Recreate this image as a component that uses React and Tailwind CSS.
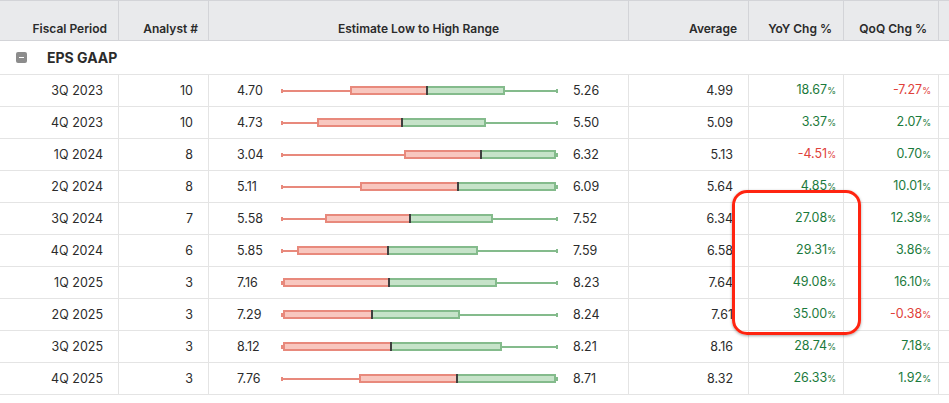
import React from 'react';

const rows = [
  { p: '3Q 2023', n: 10, lo: '4.70', hi: '5.26', b: [350, 427, 505], avg: '4.99', yoy: '18.67', qoq: '-7.27' },
  { p: '4Q 2023', n: 10, lo: '4.73', hi: '5.50', b: [317, 402, 486], avg: '5.09', yoy: '3.37', qoq: '2.07' },
  { p: '1Q 2024', n: 8, lo: '3.04', hi: '6.32', b: [404, 481, 556], avg: '5.13', yoy: '-4.51', qoq: '0.70' },
  { p: '2Q 2024', n: 8, lo: '5.11', hi: '6.09', b: [360, 458, 556], avg: '5.64', yoy: '4.85', qoq: '10.01' },
  { p: '3Q 2024', n: 7, lo: '5.58', hi: '7.52', b: [325, 410, 493], avg: '6.34', yoy: '27.08', qoq: '12.39' },
  { p: '4Q 2024', n: 6, lo: '5.85', hi: '7.59', b: [297, 388, 478], avg: '6.58', yoy: '29.31', qoq: '3.86' },
  { p: '1Q 2025', n: 3, lo: '7.16', hi: '8.23', b: [283, 389, 497], avg: '7.64', yoy: '49.08', qoq: '16.10' },
  { p: '2Q 2025', n: 3, lo: '7.29', hi: '8.24', b: [283, 372, 460], avg: '7.61', yoy: '35.00', qoq: '-0.38' },
  { p: '3Q 2025', n: 3, lo: '8.12', hi: '8.21', b: [283, 391, 502], avg: '8.16', yoy: '28.74', qoq: '7.18' },
  { p: '4Q 2025', n: 3, lo: '7.76', hi: '8.71', b: [359, 457, 556], avg: '8.32', yoy: '26.33', qoq: '1.92' },
];

const cols = 'grid grid-cols-[119px_90px_420px_120px_95px_95px_10px]';

function Pct({ v }) {
  const neg = v.startsWith('-');
  return (
    <span className={neg ? 'text-[#e0413a]' : 'text-[#1b7a3c]'}>
      {v}<span className="text-[9px]">%</span>
    </span>
  );
}

function Range({ b }) {
  const x0 = 281;
  const [s, m, e] = b.map((v) => v - x0);
  const W = 277;
  return (
    <svg width={W} height="14" className="block">
      <rect x="0" y="5" width="2" height="4" fill="#e8897c" />
      <rect x="0" y="6" width={m} height="2" fill="#e8897c" />
      <rect x={m} y="6" width={W - m} height="2" fill="#84bb8c" />
      <rect x={W - 2} y="5" width="2" height="4" fill="#84bb8c" />
      <rect x={s + 1} y="3" width={m - s - 1} height="7" fill="#f8c7bf" stroke="#e8897c" strokeWidth="2" />
      <rect x={m} y="3" width={e - m - 1} height="7" fill="#c6e3c9" stroke="#84bb8c" strokeWidth="2" />
      <rect x={m - 1} y="2" width="2" height="9" fill="#3f3f3f" />
    </svg>
  );
}

export default function App() {
  return (
    <div
      className="relative w-[949px] h-[403px] bg-white text-[12.5px] text-[#2b2b2b] overflow-hidden"
      style={{ fontFamily: 'Inter, "Liberation Sans", sans-serif' }}
    >
      <div className={`${cols} h-[41px] bg-[#e9eaec] border-t border-b border-[#d3d4d8] font-semibold text-[12px] leading-[16px]`}>
        <div className="flex items-end justify-end pr-[11px] pb-[3px] border-r border-[#d3d4d8]">Fiscal Period</div>
        <div className="flex items-end justify-end pr-[10px] pb-[3px] border-r border-[#d3d4d8]">Analyst #</div>
        <div className="flex items-end justify-center pb-[3px] border-r border-[#d3d4d8]">Estimate Low to High Range</div>
        <div className="flex items-end justify-end pr-[11px] pb-[3px] border-r border-[#d3d4d8]">Average</div>
        <div className="flex items-end justify-end pr-[11px] pb-[3px] border-r border-[#d3d4d8]">YoY Chg %</div>
        <div className="flex items-end justify-end pr-[11px] pb-[3px] border-r border-[#d3d4d8]">QoQ Chg %</div>
        <div />
      </div>

      <div className="flex items-center h-[34px] border-b border-[#e4e4e4] pl-[16px]">
        <span className="flex items-center justify-center w-[11px] h-[11px] rounded-[2px] bg-[#8c8c8c]">
          <span className="block w-[5px] h-[1.5px] bg-white" />
        </span>
        <span className="ml-[20px] font-bold text-[14px]">EPS GAAP</span>
      </div>

      {rows.map((r) => (
        <div key={r.p} className={`${cols} h-[32px] border-b border-[#e4e4e4] leading-[16px]`}>
          <div className="flex items-center justify-end pr-[15px] border-r border-[#e4e4e4]">{r.p}</div>
          <div className="flex items-center justify-end pr-[15px] border-r border-[#e4e4e4]">{r.n}</div>
          <div className="flex items-center pl-[28px] border-r border-[#e4e4e4]">
            <span className="w-[44px]">{r.lo}</span>
            <Range b={r.b} />
            <span className="ml-[15px]">{r.hi}</span>
          </div>
          <div className="flex items-center justify-end pr-[15px] border-r border-[#e4e4e4]">{r.avg}</div>
          <div className="flex items-center justify-end pr-[7px] border-r border-[#e4e4e4]"><Pct v={r.yoy} /></div>
          <div className="flex items-center justify-end pr-[7px] border-r border-[#e4e4e4]"><Pct v={r.qoq} /></div>
          <div />
        </div>
      ))}

      <div className="absolute left-[732px] top-[190px] w-[129px] h-[145px] border-[3px] border-[#ff2410] rounded-[15px] shadow-[0_1px_3px_rgba(0,0,0,0.35)]" />
    </div>
  );
}
